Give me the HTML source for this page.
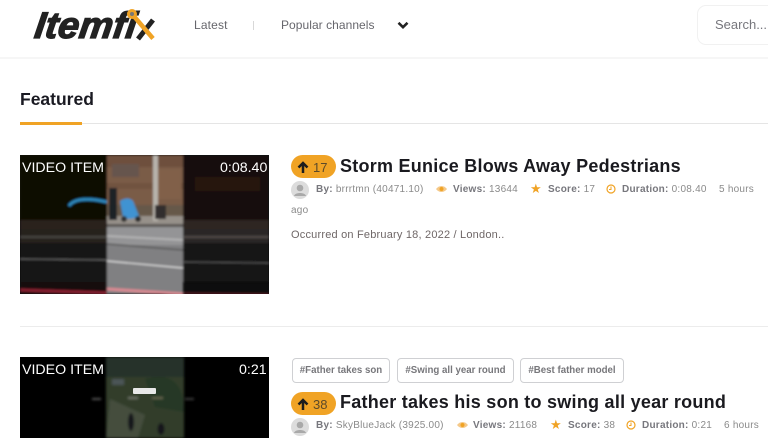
<!DOCTYPE html>
<html><head><meta charset="utf-8">
<style>
html,body{margin:0;padding:0;background:#fff;width:768px;height:438px;overflow:hidden}
body{position:relative;font-family:"Liberation Sans",sans-serif}
.a{position:absolute;white-space:nowrap}
.title{font-weight:700;font-size:18px;color:#1a1a1f;letter-spacing:.25px;line-height:22px}
.badge{position:absolute;left:291px;width:45px;height:23px;border-radius:12px;background:#f0a325}
.m{position:absolute;white-space:nowrap;font-size:10px;line-height:12px;color:#8a8a8a;letter-spacing:.24px}
.m b{color:#77777d;font-weight:700}
.tag{position:absolute;top:358px;height:25px;border:1.5px solid #cfd0d3;border-radius:4px;box-sizing:border-box;font-size:9.7px;font-weight:700;color:#77777b;line-height:23px;text-align:center;white-space:nowrap}
.vt{position:absolute;color:#fff;font-size:14.2px;line-height:16px;white-space:nowrap}
</style></head><body>

<!-- header -->
<div class="a" style="left:35px;top:4px;font-size:37px;line-height:44px;font-weight:700;font-style:italic;color:#222;letter-spacing:.2px;-webkit-text-stroke:1.3px #222;transform-origin:0 50%;transform:skewX(-8deg) scaleX(1.02)">Itemfi</div>
<div class="a" style="left:0;top:57px;width:768px;height:2px;background:#f6f6f6"></div>
<svg class="a" style="left:125px;top:8px" width="32" height="34" viewBox="0 0 32 34"><path d="M28 12L13 31" stroke="#222" stroke-width="5" fill="none"/><path d="M7 6L28 30.5" stroke="#f0a325" stroke-width="4.5" fill="none"/><circle cx="7" cy="6" r="5" fill="#f0a325"/><circle cx="7" cy="6" r="2" fill="#777"/></svg>
<div class="a" style="left:194px;top:17px;font-size:12px;line-height:16px;color:#66666c;letter-spacing:.15px">Latest</div>
<div class="a" style="left:253px;top:21px;width:1px;height:9px;background:#d8d8d8"></div>
<div class="a" style="left:281px;top:17px;font-size:12px;line-height:16px;color:#66666c;letter-spacing:.05px">Popular channels</div>
<svg class="a" style="left:397px;top:21px" width="12" height="9" viewBox="0 0 12 9"><path d="M1.5 1.8L6 6.2L10.5 1.8" stroke="#222" stroke-width="2.6" fill="none"/></svg>
<div class="a" style="left:697px;top:5px;width:100px;height:40px;border:1px solid #f1f1f1;border-radius:9px;box-sizing:border-box"></div>
<div class="a" style="left:715px;top:17px;font-size:13px;line-height:16px;color:#77777d">Search...</div>

<!-- featured -->
<div class="a" style="left:20px;top:89px;font-size:17.5px;line-height:20px;font-weight:700;color:#1a1a22">Featured</div>
<div class="a" style="left:82px;top:123px;width:686px;height:1px;background:#e5e5e5"></div>
<div class="a" style="left:20px;top:122px;width:62px;height:3px;background:#f0a325"></div>

<!-- thumb 1 -->
<svg class="a" style="left:20px;top:155px" width="249" height="139" viewBox="0 0 249 139">
<defs><filter id="bl"><feGaussianBlur stdDeviation="1"/></filter></defs>
<rect width="249" height="139" fill="#0d0d0e"/>
<g filter="url(#bl)">
<rect x="0" y="0" width="87" height="65" fill="#0a0706"/>
<rect x="163" y="0" width="86" height="65" fill="#170d09"/>
<rect x="175" y="22" width="65" height="14" fill="#271609"/>
<rect x="0" y="65" width="87" height="9" fill="#2a211c"/>
<rect x="163" y="65" width="86" height="9" fill="#2f2822"/>
<rect x="0" y="74" width="87" height="14" fill="#26231f"/>
<rect x="163" y="74" width="86" height="14" fill="#2b2825"/>
<rect x="0" y="88" width="87" height="39" fill="#141415"/>
<rect x="163" y="88" width="86" height="39" fill="#171718"/>
<rect x="0" y="81" width="87" height="2" fill="#4a4744"/>
<rect x="163" y="81" width="86" height="2" fill="#4f4b48"/>
<path d="M0 104L87 105" stroke="#6c6c6c" stroke-width="1"/>
<path d="M163 107L249 108" stroke="#5c5c5c" stroke-width="1"/>
<rect x="0" y="127" width="87" height="12" fill="#181111"/>
<path d="M0 135L87 138" stroke="#8a2030" stroke-width="3"/>
<path d="M163 138L249 139" stroke="#6a1a22" stroke-width="1.5"/>
<path d="M49 51C54 43 70 43 87 47" stroke="#2d88bd" stroke-width="3" fill="none"/>
<rect x="87" y="0" width="76" height="62" fill="#7a5b47"/>
<rect x="87" y="0" width="76" height="12" fill="#6e503e"/>
<rect x="92" y="9" width="27" height="13" fill="#66554d"/>
<rect x="87" y="28" width="76" height="6" fill="#71523f"/>
<rect x="137" y="14" width="24" height="30" fill="#81604a"/>
<rect x="87" y="50" width="76" height="13" fill="#665849"/>
<rect x="87" y="61" width="76" height="8" fill="#97918a"/>
<rect x="87" y="69" width="76" height="3" fill="#5a5754"/>
<rect x="87" y="72" width="76" height="67" fill="#808082"/>
<rect x="87" y="72" width="76" height="18" fill="#949496"/>
<path d="M87 81L163 85" stroke="#bcbcbc" stroke-width="1.5"/>
<path d="M87 89L163 95" stroke="#565657" stroke-width="1.500"/>
<path d="M87 106L163 113" stroke="#e0e0e0" stroke-width="1.2"/>
<path d="M87 134L163 139" stroke="#dd8a93" stroke-width="3"/>
<rect x="133" y="0" width="5" height="66" fill="#b7b3ac"/>
<rect x="135" y="50" width="11" height="14" fill="#302f2f"/>
<rect x="89" y="33" width="8" height="32" fill="#1e2128"/>
<path d="M100 46Q108 41 113 46L119 61Q110 66 103 62Z" fill="#3f93d2"/>
<circle cx="118" cy="64" r="3" fill="#2a2a2a"/><circle cx="104" cy="64" r="3" fill="#333"/>
</g>
</svg>
<div class="vt" style="left:22px;top:160px">VIDEO ITEM</div>
<div class="vt" style="left:220px;top:160px">0:08.40</div>

<div class="badge" style="top:155px"></div>
<svg class="a" style="left:296px;top:161px" width="14" height="13" viewBox="0 0 14 13"><path d="M7 12V2.500M2.500 6.500L7 2L11.500 6.500" stroke="#1d1d1d" stroke-width="2.500" fill="none"/></svg>
<div class="a" style="left:313px;top:160px;font-size:13px;line-height:15px;color:#5c4a2a">17</div>
<div class="a title" style="left:340px;top:155px">Storm Eunice Blows Away Pedestrians</div>

<svg class="a" style="left:291px;top:181px" width="18" height="18" viewBox="0 0 18 18"><circle cx="9" cy="9" r="9" fill="#dcdcdc"/><circle cx="9" cy="7" r="3.3" fill="#a9a9a9"/><path d="M3 15c1-4 11-4 12 0z" fill="#a9a9a9"/></svg>
<div class="m" style="left:316px;top:184px"><b>By:</b> brrrtmn (40471.10)</div>
<svg class="a" style="left:436px;top:185px" width="11" height="8" viewBox="0 0 11 8"><path d="M0 4C3 0 8 0 11 4C8 8 3 8 0 4Z" fill="#f5c98a"/><circle cx="5.5" cy="4" r="2" fill="#f0a325"/></svg>
<div class="m" style="left:453px;top:184px"><b>Views:</b> 13644</div>
<div class="a" style="left:530px;top:181px;font-size:13px;line-height:15px;color:#f0a325">★</div>
<div class="m" style="left:548px;top:184px"><b>Score:</b> 17</div>
<svg class="a" style="left:606px;top:184px" width="10" height="10" viewBox="0 0 10 10"><circle cx="5" cy="5" r="4" stroke="#f0a325" stroke-width="1.2" fill="none"/><path d="M5 2.500V5.500H3" stroke="#f0a325" fill="none"/></svg>
<div class="m" style="left:622px;top:184px"><b>Duration:</b> 0:08.40</div>
<div class="m" style="left:719px;top:184px">5 hours</div>
<div class="m" style="left:291px;top:205px">ago</div>
<div class="a" style="left:291px;top:229px;font-size:11px;line-height:13px;color:#6f6767;letter-spacing:.2px">Occurred on February 18, 2022 / London..</div>

<div class="a" style="left:20px;top:326px;width:748px;height:1px;background:#ececec"></div>

<!-- thumb 2 -->
<svg class="a" style="left:20px;top:357px" width="249" height="81" viewBox="0 0 249 81">
<defs><filter id="bl2"><feGaussianBlur stdDeviation="1.2"/></filter></defs>
<rect width="249" height="81" fill="#000"/>
<g filter="url(#bl2)">
<rect x="86" y="0" width="78" height="81" fill="#333d2c"/>
<rect x="86" y="0" width="78" height="20" fill="#27312a"/>
<path d="M125 22C150 15 164 25 164 55L135 50Z" fill="#273825"/>
<path d="M90 42L125 58L118 81H86Z" fill="#454e3c"/>
<ellipse cx="111" cy="65" rx="3" ry="9" fill="#15181a"/>
<ellipse cx="141" cy="72" rx="3.500" ry="6" fill="#15181a"/>
<rect x="108" y="40" width="10" height="2" fill="#6e7366"/>
<rect x="92" y="22" width="12" height="6" fill="#4c5456"/>
<rect x="132" y="40" width="11" height="2" fill="#66664f"/>
<rect x="72" y="41" width="9" height="2" fill="#555"/>
<rect x="165" y="41" width="9" height="2" fill="#3d3d3d"/>
</g>
<rect x="113" y="31" width="23" height="6" rx="1" fill="#e8e8e8"/>
</svg>
<div class="vt" style="left:22px;top:362px">VIDEO ITEM</div>
<div class="vt" style="left:239px;top:362px">0:21</div>

<div class="tag" style="left:292px;width:98px">#Father takes son</div>
<div class="tag" style="left:397px;width:117px">#Swing all year round</div>
<div class="tag" style="left:520px;width:104px">#Best father model</div>

<div class="badge" style="top:392px"></div>
<svg class="a" style="left:296px;top:398px" width="14" height="13" viewBox="0 0 14 13"><path d="M7 12V2.500M2.500 6.500L7 2L11.500 6.500" stroke="#1d1d1d" stroke-width="2.500" fill="none"/></svg>
<div class="a" style="left:313px;top:397px;font-size:13px;line-height:15px;color:#5c4a2a">38</div>
<div class="a title" style="left:340px;top:391px">Father takes his son to swing all year round</div>

<svg class="a" style="left:291px;top:418px" width="18" height="18" viewBox="0 0 18 18"><circle cx="9" cy="9" r="9" fill="#dcdcdc"/><circle cx="9" cy="7" r="3.3" fill="#a9a9a9"/><path d="M3 15c1-4 11-4 12 0z" fill="#a9a9a9"/></svg>
<div class="m" style="left:316px;top:420px"><b>By:</b> SkyBlueJack (3925.00)</div>
<svg class="a" style="left:457px;top:421px" width="11" height="8" viewBox="0 0 11 8"><path d="M0 4C3 0 8 0 11 4C8 8 3 8 0 4Z" fill="#f5c98a"/><circle cx="5.5" cy="4" r="2" fill="#f0a325"/></svg>
<div class="m" style="left:473px;top:420px"><b>Views:</b> 21168</div>
<div class="a" style="left:550px;top:417px;font-size:13px;line-height:15px;color:#f0a325">★</div>
<div class="m" style="left:568px;top:420px"><b>Score:</b> 38</div>
<svg class="a" style="left:626px;top:420px" width="10" height="10" viewBox="0 0 10 10"><circle cx="5" cy="5" r="4" stroke="#f0a325" stroke-width="1.2" fill="none"/><path d="M5 2.500V5.500H3" stroke="#f0a325" fill="none"/></svg>
<div class="m" style="left:642px;top:420px"><b>Duration:</b> 0:21</div>
<div class="m" style="left:724px;top:420px">6 hours</div>

</body></html>
